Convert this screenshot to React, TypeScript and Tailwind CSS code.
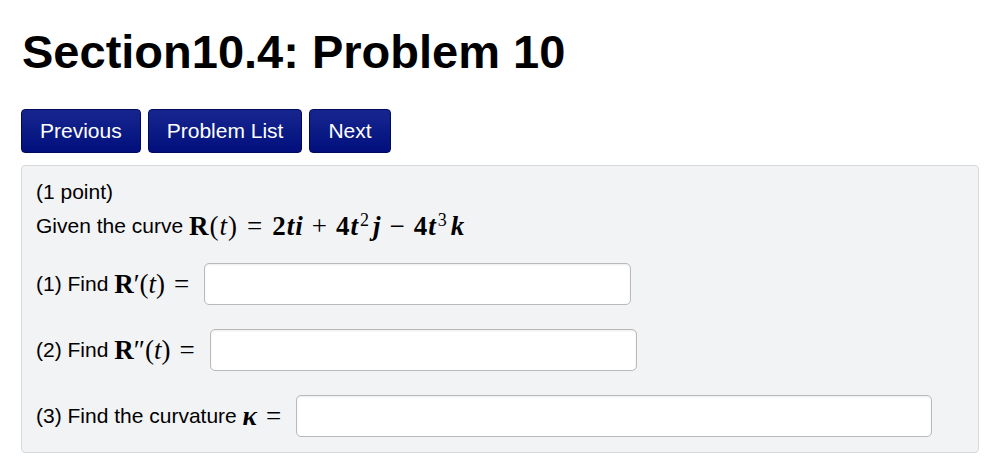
import React from "react";

const sans = { fontFamily: '"Liberation Sans", Arial, sans-serif' };

function M({ children, wide }: { children: React.ReactNode; wide?: boolean }) {
  // TeX-ish math run
  return (
    <span
      className={
        wide
          ? "font-['Liberation_Serif',serif] text-[27px] tracking-[1px] whitespace-nowrap"
          : "font-['Liberation_Serif',serif] text-[27px] whitespace-nowrap"
      }
    >
      {children}
    </span>
  );
}

function Rel({ children }: { children: React.ReactNode }) {
  return <span className="mx-[9px]">{children}</span>;
}

function Bin({ children }: { children: React.ReactNode }) {
  return <span className="mx-[8px]">{children}</span>;
}

function Sup({ children }: { children: React.ReactNode }) {
  return <sup className="ml-[1px] mr-[3px] text-[18px]">{children}</sup>;
}

function Answer({ w }: { w: string }) {
  return (
    <input
      type="text"
      className={`ml-[6px] h-[42px] ${w} rounded-[5px] border border-[#b9b9b9] bg-white shadow-[inset_0_1px_2px_rgba(0,0,0,0.08)] outline-none`}
    />
  );
}

export default function App() {
  const buttons = ["Previous", "Problem List", "Next"];

  return (
    <div className="min-h-screen bg-white pl-[21px] pr-[8px] pt-[25px] text-black" style={sans}>
      <h1 className="ml-[1px] text-[47px] font-bold leading-[54px]">Section10.4: Problem 10</h1>

      {/* nav buttons */}
      <div className="mt-[30px] flex gap-[7px]">
        {buttons.map((b) => (
          <button
            key={b}
            className="h-[44px] rounded-[4px] border border-[#000a5c] bg-gradient-to-b from-[#17268f] to-[#020e7c] px-[18px] text-[21px] text-white"
          >
            {b}
          </button>
        ))}
      </div>

      {/* problem box */}
      <div className="mt-[12px] w-[958px] rounded-[4px] border border-[#d6d8da] bg-[#f2f3f5] pb-[15px] pl-[14px] pt-[13px] text-[21px]">
        <div className="h-[26px] leading-[26px]">(1 point)</div>

        <div className="mt-[6px] flex h-[30px] items-center">
          <span>Given the curve&nbsp;</span>
          <M wide>
            <b>R</b>(<i>t</i>)
            <Rel>=</Rel>
            <b>2<i>ti</i></b>
            <Bin>+</Bin>
            <b>4<i>t</i></b>
            <Sup>2</Sup>
            <b><i>j</i></b>
            <Bin>−</Bin>
            <b>4<i>t</i></b>
            <Sup>3</Sup>
            <b><i>k</i></b>
          </M>
        </div>

        <div className="mt-[22px] flex h-[42px] items-center">
          <span>(1) Find&nbsp;</span>
          <M>
            <b>R</b>′(<i>t</i>)<Rel>=</Rel>
          </M>
          <Answer w="w-[427px]" />
        </div>

        <div className="mt-[24px] flex h-[42px] items-center">
          <span>(2) Find&nbsp;</span>
          <M>
            <b>R</b>″(<i>t</i>)<Rel>=</Rel>
          </M>
          <Answer w="w-[427px]" />
        </div>

        <div className="mt-[24px] flex h-[42px] items-center">
          <span>(3) Find the curvature&nbsp;</span>
          <M>
            <b><i>κ</i></b>
            <Rel>=</Rel>
          </M>
          <Answer w="w-[636px]" />
        </div>
      </div>
    </div>
  );
}
